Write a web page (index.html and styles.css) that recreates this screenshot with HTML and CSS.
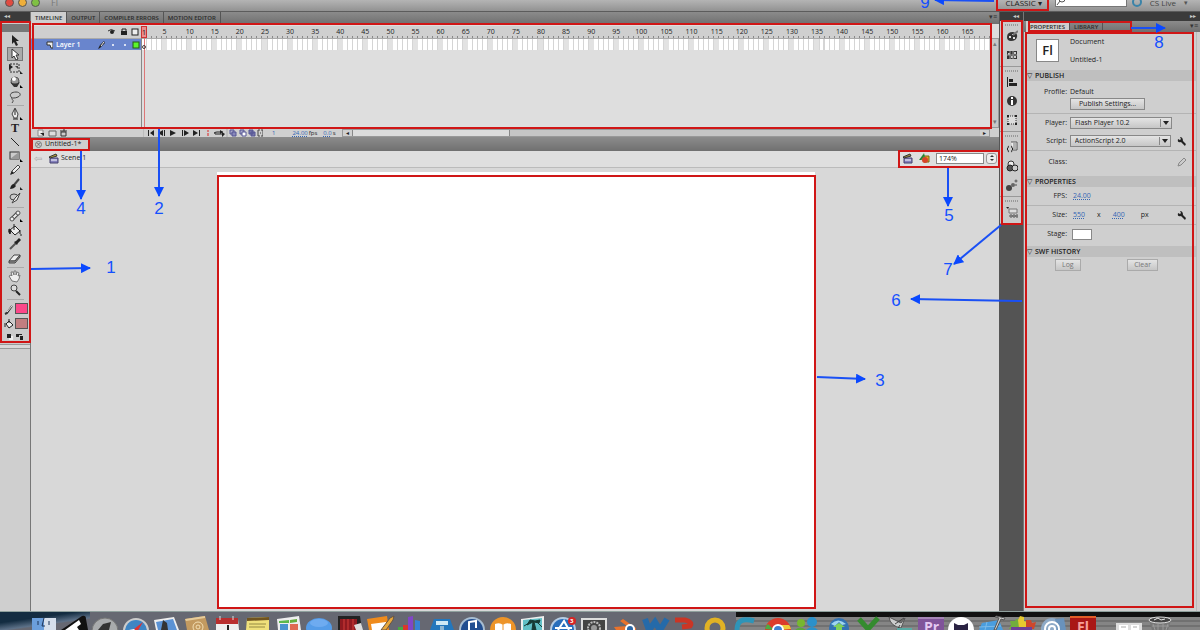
FILE: index.html
```
<!DOCTYPE html>
<html lang="en">
    <head>
        <meta charset="utf-8">
        <title>Untitled-1</title>
        <link rel="stylesheet" href="styles.css">
    </head>
    <body>
        <header class="titlebar">
            <span class="light red"></span>
            <span class="light yellow"></span>
            <span class="light green"></span>
            <span class="app-name">Fl</span>
            <button class="workspace-button">CLASSIC ▾</button>
            <label class="search">
                <svg width="12" height="9" viewBox="0 0 12 9"><circle cx="6" cy="2" r="3" fill="none" stroke="#555"/><path d="M4 4 1 8" stroke="#555"/></svg>
                <input type="text" aria-label="Search">
            </label>
            <svg class="live-ring" width="12" height="8" viewBox="0 0 12 8"><circle cx="6" cy="3" r="4" fill="none" stroke="#3b83a8" stroke-width="2"/></svg>
            <button class="live-button">CS Live</button>
            <span class="live-caret">▾</span>
        </header>

        <div class="app">
            <nav class="tools">
                <div class="dark-head">◂◂</div>
                <div class="tools-grip"></div>
                <button aria-label="Selection"><svg viewBox="0 0 16 14"><path d="M5 2v9l2-2 2 4 2-1-2-4h3z" fill="#222"/></svg></button>
                <button class="active" aria-label="Subselection"><svg viewBox="0 0 16 14"><path d="M5 2v9l2-2 2 4 2-1-2-4h3z" fill="#fff" stroke="#333"/></svg></button>
                <button aria-label="Free transform"><svg viewBox="0 0 16 14"><rect x="3" y="3" width="9" height="8" fill="none" stroke="#333" stroke-dasharray="2 1"/><path d="M2 3v6l4-3zM13 10v3h3z" fill="#222"/><path d="M8 5h3v3z" fill="#444"/></svg></button>
                <button aria-label="3D rotation"><svg viewBox="0 0 16 14"><circle cx="8" cy="6" r="4" fill="#999" stroke="#555"/><path d="M3 7q5 3 10 0l-3 5H7z" fill="#333"/><circle cx="7" cy="4" r="2" fill="#fff"/><path d="M13 10v3h3z"/></svg></button>
                <button aria-label="Lasso"><svg viewBox="0 0 16 14"><path d="M5 9C1 5 5 3 9 3s6 3 2 5-7 0-6 2 2 1 0 4" fill="none" stroke="#444"/></svg></button>
                <hr>
                <button aria-label="Pen"><svg viewBox="0 0 16 14"><path d="M8 1 5 7l2 4h3l1-4z" fill="#eee" stroke="#444"/><path d="M8 2v6M6 12h5" stroke="#222"/><path d="M13 10v3h3z"/></svg></button>
                <button class="text-tool" aria-label="Text">T</button>
                <button aria-label="Line"><svg viewBox="0 0 16 14"><path d="m4 3 8 8" stroke="#222"/></svg></button>
                <button aria-label="Rectangle"><svg viewBox="0 0 16 14"><rect x="3" y="3" width="9" height="7" fill="#ccc" stroke="#333"/><path d="M3 10 12 3v7z" fill="#999"/><path d="M13 10v3h3z"/></svg></button>
                <button aria-label="Pencil"><svg viewBox="0 0 16 14"><path d="m4 11 1-3 6-6 2 2-6 6z" fill="#eee" stroke="#444"/><path d="m3 12 2-4 2 2z" fill="#222"/></svg></button>
                <button aria-label="Brush"><svg viewBox="0 0 16 14"><path d="m12 2-5 6" stroke="#444" stroke-width="2"/><path d="M3 12q1-5 4-5l2 2q-2 3-6 3zM13 10v3h3z" fill="#222"/></svg></button>
                <button aria-label="Deco"><svg viewBox="0 0 16 14"><ellipse cx="7" cy="6" rx="4" ry="3" fill="none" stroke="#444"/><path d="m13 2-5 5-3 5 5-3z" fill="#eee" stroke="#444"/></svg></button>
                <hr>
                <button aria-label="Bone"><svg viewBox="0 0 16 14"><path d="m5 10 6-6" stroke="#444" stroke-width="4"/><path d="m5 10 6-6" stroke="#eee" stroke-width="2"/><circle cx="5" cy="10" r="2" fill="#eee" stroke="#555"/><circle cx="11" cy="4" r="2" fill="#eee" stroke="#555"/><path d="M13 10v3h3z"/></svg></button>
                <button aria-label="Paint bucket"><svg viewBox="0 0 16 14"><path d="m3 7 5-4 5 5-5 4z" fill="#eee" stroke="#222"/><path d="M2 6q-1 3 1 5l1-4z" fill="#222" stroke="#222"/><path d="M7 1v6M13 7v4M13 12h2" stroke="#222"/></svg></button>
                <button aria-label="Eyedropper"><svg viewBox="0 0 16 14"><path d="m3 12 6-6" stroke="#555" stroke-width="2"/><path d="m7 5 2-1 3-3 2 2-3 3-1 2z" fill="#222"/></svg></button>
                <button aria-label="Eraser"><svg viewBox="0 0 16 14"><path d="m2 10 5-6h6l-5 6z" fill="#eee" stroke="#444"/><path d="m2 10 6 0 5-6v2l-5 6H2z" fill="#999" stroke="#444"/></svg></button>
                <hr>
                <button aria-label="Hand"><svg viewBox="0 0 16 14"><path d="M5 12 2 7l2-1 1 1-1-4h2l1 3V2h2v4l1-3 2 1-1 3 2-1-1 4-2 3z" fill="#eee" stroke="#777"/></svg></button>
                <button aria-label="Zoom"><svg viewBox="0 0 16 14"><circle cx="7" cy="5" r="3" fill="#ddd" stroke="#444"/><path d="m9 8 4 4" stroke="#222" stroke-width="2"/></svg></button>
                <hr>
                <div class="color-row">
                    <svg viewBox="0 0 10 12"><path d="m1 11 2-1 5-7" fill="none" stroke="#333" stroke-width="2"/><path d="m3 9 5-6" stroke="#eee"/></svg>
                    <button class="swatch pink" aria-label="Stroke colour"></button>
                </div>
                <div class="color-row">
                    <svg viewBox="0 0 10 12"><path d="m2 6 3-3 4 4-4 3z" fill="#eee" stroke="#222"/><path d="M1 5v4M5 1v4" stroke="#222"/></svg>
                    <button class="swatch brown" aria-label="Fill colour"></button>
                </div>
                <div class="color-swap">
                    <svg width="18" height="7" viewBox="0 0 18 7"><path d="M3 3h4v4H3z" fill="#eee"/><path d="M1 1h4v4H1zM10 1h3v3h-3zM14 3h3v4h-3zM13 1h3v1h-3z" fill="#222"/></svg>
                </div>
                <div class="tools-end"></div>
            </nav>

            <main class="document">
                <div class="tabs">
                    <button class="tab active">TIMELINE</button>
                    <button class="tab">OUTPUT</button>
                    <button class="tab">COMPILER ERRORS</button>
                    <button class="tab">MOTION EDITOR</button>
                    <span class="panel-menu">▾≡</span>
                </div>

                <section class="timeline">
                    <div class="layers">
                        <div class="layers-head">
                            <svg width="32" height="10" viewBox="0 0 32 10"><path d="M1 4q3-3 7 0" fill="none" stroke="#333"/><circle cx="5" cy="5" r="2" fill="#222"/><path d="M14 4h6v4h-6z" fill="#222"/><path d="M15 4V2h4v2" fill="none" stroke="#222"/><rect x="25" y="2" width="6" height="6" fill="#eee" stroke="#222"/></svg>
                        </div>
                        <div class="layer">
                            <svg width="7" height="8" viewBox="0 0 7 8"><path d="M1 1h6v6H5L4 4H1z" fill="#eee" stroke="#333"/></svg>
                            <span class="layer-name">Layer 1</span>
                            <svg width="44" height="10" viewBox="0 0 44 10"><path d="m1 9 2-4 4-4 1 2-5 5z" fill="#222"/><path d="m4 6 3-4" stroke="#eee"/><circle cx="16" cy="5" r="1" fill="#fff"/><circle cx="28" cy="5" r="1" fill="#fff"/><rect x="36" y="2" width="6" height="6" fill="#5bf52c" stroke="#235c12"/></svg>
                        </div>
                    </div>
                    <div class="frames">
                        <ol class="ruler">
                            <li class="edge"></li>
                            <li>5</li><li>10</li><li>15</li><li>20</li><li>25</li><li>30</li><li>35</li><li>40</li><li>45</li><li>50</li><li>55</li>
                            <li>60</li><li>65</li><li>70</li><li>75</li><li>80</li><li>85</li><li>90</li><li>95</li><li>100</li><li>105</li><li>110</li>
                            <li>115</li><li>120</li><li>125</li><li>130</li><li>135</li><li>140</li><li>145</li><li>150</li><li>155</li><li>160</li><li>165</li>
                            <li class="edge"></li>
                        </ol>
                        <span class="playhead">1</span>
                        <span class="keyframe"></span>
                    </div>
                    <div class="vscroll"><span>▴</span><span>▾</span></div>
                </section>

                <div class="controls">
                    <div class="layer-actions">
                        <svg width="30" height="8" viewBox="0 0 30 8"><path d="M1 1h5v6H1z" fill="#eee" stroke="#888"/><path d="M3 4h4v3z" fill="#222"/><path d="M12 2h7v5h-7z" fill="#ddd" stroke="#666"/><path d="M24 3h5v4h-5zM23 2h7M26 1h2" fill="#ccc" stroke="#333"/></svg>
                    </div>
                    <svg class="transport" width="120" height="8" viewBox="0 0 120 8"><path d="M0 0v8M84 0v8" stroke="#aaa"/><path d="M5 1h1v6H5zM11 1v6L7 4zM20 1v6l-5-3zM21 1h1v6h-1zM27 1v6l6-3zM39 1h1v6h-1zM41 1v6l5-3zM50 1v6l5-3zM56 1h1v6h-1z" fill="#222"/><path d="M65 1v2M65 4v3" stroke="#d22"/><path d="M80 3h-6q-4 0-2 2h7" fill="none" stroke="#222"/><path d="M77 1v4l3-2zM79 3v5l3-3z" fill="#222"/><g stroke="#545494"><path d="M87 1h4v4h-4z" fill="#aac"/><path d="M89 3h4v4h-4z" fill="#88b"/><path d="M97 1h4v4h-4z" fill="#aac"/><path d="M99 3h4v4h-4z" fill="#fff"/><path d="M106 1h4v4h-4zM108 3h4v4h-4z" fill="#77a"/></g><path d="M117 1h-2v6h2M118 1h2v6h-2M117 4h1" fill="none" stroke="#444"/></svg>
                    <span class="frame-no">1</span>
                    <a href="#fps">24.00</a><span class="unit">fps</span>
                    <a href="#time">0.0</a><span class="unit">s</span>
                    <div class="hscroll">
                        <span class="scroll-arrow">◂</span>
                        <span class="thumb"></span>
                        <span class="track"></span>
                        <span class="scroll-arrow">▸</span>
                    </div>
                </div>

                <div class="doc-tabs">
                    <button class="doc-tab"><span class="close">×</span>Untitled-1*</button>
                </div>

                <div class="edit-bar">
                    <span class="back">⇦</span>
                    <svg width="10" height="11" viewBox="0 0 10 11"><path d="M1 5h8v5H1z" fill="#8581bd" stroke="#45406f"/><path d="m0 4 7-3 1 2-7 2z" fill="#bba63a" stroke="#333"/><path d="M2 7h6" stroke="#fff"/></svg>
                    <span class="scene">Scene 1</span>
                    <svg width="10" height="11" viewBox="0 0 10 11"><path d="M1 5h8v5H1z" fill="#8581bd" stroke="#45406f"/><path d="m0 4 7-3 1 2-7 2z" fill="#a58f3f" stroke="#333"/><path d="M2 7h6" stroke="#fff"/></svg>
                    <svg width="11" height="11" viewBox="0 0 11 11"><path d="M5 3h5v6H5z" fill="#e8b023" stroke="#7b6114"/><path d="m5 0 2 7H0z" fill="#3a9b45"/><circle cx="6" cy="7" r="3" fill="#d7442a"/><path d="m1 7 4-5" stroke="#286a31"/></svg>
                    <input class="zoom" type="text" value="174%" aria-label="Zoom">
                    <button class="stepper" aria-label="Zoom levels"><svg width="4" height="6" viewBox="0 0 4 6"><path d="M2 0 4 2H0zM2 6 0 4h4z" fill="#333"/></svg></button>
                </div>

                <div class="pasteboard"><div class="stage"></div></div>
            </main>

            <aside class="icon-dock">
                <div class="dark-head">◂◂</div>
                <div class="icon-group">
                    <button aria-label="Color"><svg viewBox="0 0 12 12"><path d="M1 7q0-5 6-5 5 1 4 5-1 4-6 4-4 0-4-4z" fill="#333"/><path d="M3 6h2v2H3zM6 4h2v1H6zM7 7h2v2H7z" fill="#ddd"/><path d="m7 5 5-4" stroke="#777" stroke-width="2"/></svg></button>
                    <button aria-label="Swatches"><svg viewBox="0 0 12 12"><path d="M1 2h10v8H1z" fill="#333"/><path d="M2 4h2v2H2zM8 3h2v2H8zM5 7h2v2H5zM8 7h2v2H8z" fill="#ccc"/><path d="M1 6h10M4 2v8M7 2v8" stroke="#999"/></svg></button>
                </div>
                <div class="icon-group">
                    <button aria-label="Align"><svg viewBox="0 0 12 12"><path d="M1 1h1v10H1zM3 3h4v3H3zM3 7h8v3H3z" fill="#222"/></svg></button>
                    <button aria-label="Info"><svg viewBox="0 0 12 12"><circle cx="6" cy="6" r="5" fill="#333"/><path d="M5 2h2v2H5zM5 5h2v5H5z" fill="#fff"/></svg></button>
                    <button aria-label="Transform"><svg viewBox="0 0 12 12"><path d="M2 2h8v8H2z" fill="#ddd" stroke="#333" stroke-dasharray="1 1"/><path d="M1 1h2v2H1zM9 1h2v2H9zM1 9h2v2H1zM9 9h2v2H9z" fill="#222"/></svg></button>
                </div>
                <div class="icon-group">
                    <button aria-label="Code snippets"><svg viewBox="0 0 12 12"><path d="M5 1h6v8H7" fill="#eee" stroke="#555"/><path d="M7 3h3M7 5h3M7 7h3" stroke="#777"/><path d="M3 5q-1 0-1 2L1 8l1 1q0 2 1 2M5 5q1 0 1 2l1 1-1 1q0 2-1 2" fill="none" stroke="#222"/></svg></button>
                    <button aria-label="Components"><svg viewBox="0 0 12 12"><circle cx="5" cy="4" r="3" fill="#eee" stroke="#333"/><circle cx="4" cy="8" r="3" fill="#555" stroke="#222"/><circle cx="9" cy="8" r="3" fill="#ccc" stroke="#222"/></svg></button>
                    <button aria-label="Motion presets"><svg viewBox="0 0 12 12"><circle cx="3" cy="9" r="3" fill="#444"/><circle cx="7" cy="6" r="2" fill="#666"/><circle cx="10" cy="2" r="1" fill="#ccc" stroke="#555"/><circle cx="10" cy="6" r="1" fill="#777"/></svg></button>
                </div>
                <div class="icon-group">
                    <button aria-label="Project"><svg viewBox="0 0 12 12"><path d="M0 1h3L2 3z" fill="#222"/><path d="M3 3h8v4H3z" fill="#ddd" stroke="#777"/><path d="M4 9h2v2H4zM7 9h2v2H7zM10 9h2v2h-2z" fill="#eee" stroke="#555"/></svg></button>
                </div>
            </aside>

            <aside class="inspector">
                <div class="dark-head">▸▸</div>
                <div class="tabs">
                    <button class="tab active">PROPERTIES</button>
                    <button class="tab">LIBRARY</button>
                    <span class="panel-menu">▾≡</span>
                </div>
                <div class="inspector-body">
                    <div class="doc-info">
                        <span class="doc-icon">Fl</span>
                        <div class="doc-names"><span>Document</span><span>Untitled-1</span></div>
                    </div>

                    <h2>PUBLISH</h2>
                    <div class="block profile">
                        <div class="row"><span class="name">Profile:</span><span>Default</span></div>
                        <div class="row"><span class="name"></span><button class="push">Publish Settings...</button></div>
                    </div>
                    <div class="block publish">
                        <div class="row">
                            <label class="name" for="player">Player:</label>
                            <span class="select"><select id="player"><option>Flash Player 10.2</option></select><i></i></span>
                        </div>
                        <div class="row">
                            <label class="name" for="script">Script:</label>
                            <span class="select"><select id="script"><option>ActionScript 2.0</option></select><i></i></span>
                            <button class="tool-icon" aria-label="ActionScript settings"><svg viewBox="0 0 10 10"><path d="M3 1q3 0 3 4l3 3-1 2-4-4Q0 7 1 3l2 1 1-1z" fill="#222"/></svg></button>
                        </div>
                    </div>
                    <div class="block class-row">
                        <div class="row">
                            <span class="name">Class:</span>
                            <button class="tool-icon" aria-label="Edit class"><svg viewBox="0 0 10 10"><path d="m1 9 1-3 5-5 2 2-5 5z" fill="#ccc" stroke="#888"/></svg></button>
                        </div>
                    </div>

                    <h2>PROPERTIES</h2>
                    <div class="block">
                        <div class="row hot"><span class="name">FPS:</span><a href="#fps">24.00</a></div>
                    </div>
                    <div class="block">
                        <div class="row hot">
                            <span class="name">Size:</span><a href="#width">550</a><span class="times">x</span><a href="#height">400</a><span class="px">px</span>
                            <button class="tool-icon" aria-label="Document settings"><svg viewBox="0 0 10 10"><path d="M3 1q3 0 3 4l3 3-1 2-4-4Q0 7 1 3l2 1 1-1z" fill="#222"/></svg></button>
                        </div>
                    </div>
                    <div class="block last">
                        <div class="row"><span class="name">Stage:</span><button class="stage-color" aria-label="Stage colour"></button></div>
                    </div>

                    <h2>SWF HISTORY</h2>
                    <div class="history">
                        <button class="push" disabled>Log</button>
                        <button class="push" disabled>Clear</button>
                    </div>
                </div>
            </aside>
        </div>

        <ul class="dock">
            <li><svg viewBox="0 0 30 19"><path d="M3 7h12v12H3z" fill="#6b9fdc"/><path d="M15 7h12v12H15z" fill="#d5dfec"/><path d="M9 10v4M20 10v4M15 7l-2 8h3" stroke="#1d3458" fill="none"/></svg></li>
            <li><svg viewBox="0 0 30 19"><path d="M1 19 22 5q4-1 4 3l2 11z" fill="#111"/><path d="m5 19 14-10 2 4-4 3 2 3z" fill="#fff"/></svg></li>
            <li><svg viewBox="0 0 30 19"><circle cx="15" cy="20" r="13" fill="#a9abad" stroke="#777"/><path d="m8 19 5-6 8-2-2 8z" fill="#333"/></svg></li>
            <li><svg viewBox="0 0 30 19"><circle cx="15" cy="20" r="13" fill="#ccc"/><circle cx="15" cy="20" r="11" fill="#3f85c3"/><path d="m22 11-9 7 3 3z" fill="#d33"/><path d="m8 19 5-1 3 3z" fill="#fff"/></svg></li>
            <li><svg viewBox="0 0 30 19"><path d="m2 9 20-3 5 13H4z" fill="#eee"/><path d="m4 11 17-3 4 11H6z" fill="#5b92d4"/><path d="m11 9 4 3 1 7h-7z" fill="#333"/></svg></li>
            <li><svg viewBox="0 0 30 19"><path d="m3 8 20-3 4 14H5z" fill="#c39a60"/><path d="m3 8 20-3v2L4 10z" fill="#e6cc9b"/><circle cx="16" cy="16" r="5" fill="none" stroke="#f3dfb4"/><circle cx="16" cy="16" r="2" fill="none" stroke="#f3dfb4"/></svg></li>
            <li><svg viewBox="0 0 30 19"><path d="M3 8h22l1 11H3z" fill="#eee"/><path d="M3 7h22v6H3z" fill="#b92e2e"/><path d="M7 5v4M20 5v4" stroke="#ddd"/><path d="M15 14v5" stroke="#222" stroke-width="2"/></svg></li>
            <li><svg viewBox="0 0 30 19"><path d="m4 7 22-1v13H3z" fill="#efe07b"/><path d="m4 7 22-1v3L4 10z" fill="#705420"/><path d="M6 13h17M6 16h16" stroke="#958a45"/></svg></li>
            <li><svg viewBox="0 0 30 19"><path d="m3 8 22-3 2 14H4z" fill="#eee"/><path d="m5 10 10-1v3H5z" fill="#5cb84d"/><path d="m16 9 7-1v3l-7 1z" fill="#66ae3c"/><path d="M6 13h8v6H6z" fill="#4b93cf"/><path d="M16 13h8v6h-8z" fill="#e06a52"/></svg></li>
            <li><svg viewBox="0 0 30 19"><ellipse cx="15" cy="17" rx="13" ry="10" fill="#559ce8"/><ellipse cx="15" cy="12" rx="9" ry="4" fill="#6eabf0"/></svg></li>
            <li><svg viewBox="0 0 30 19"><path d="M3 5h22l2 14H3z" fill="#222"/><path d="M5 8h17v11H5z" fill="#8f1a20"/><path d="M9 8v11M13 8v11M18 8v11" stroke="#d23c39"/><path d="m19 14 7-2 2 7h-7z" fill="#ddd"/></svg></li>
            <li><svg viewBox="0 0 30 19"><path d="m2 8 20-3 2 14H4z" fill="#ef8b1c"/><path d="m6 13 15-2v8H7z" fill="#fff"/><path d="m16 19 9-12 4-2-1 4-7 10z" fill="#e9a83c" stroke="#654"/></svg></li>
            <li><svg viewBox="0 0 30 19"><path d="M2 16h6v3H2z" fill="#48a943"/><path d="M7 14h5v5H7z" fill="#d9362c"/><path d="m12 6 5-1v14h-5z" fill="#8146c8"/><path d="m19 9 5 1v9h-5z" fill="#3784d6"/></svg></li>
            <li><svg viewBox="0 0 30 19"><path d="m7 8 16 0 4 11H3z" fill="#2377bd"/><path d="M9 10h12v4H9z" fill="#cfe9f5"/><path d="M13 15h4v4h-4z" fill="#8fb6d2"/></svg></li>
            <li><svg viewBox="0 0 30 19"><circle cx="15" cy="19" r="13" fill="#a7bdd2"/><circle cx="15" cy="19" r="11" fill="#214e91"/><path d="M12 19v-8l7-1v7" fill="none" stroke="#fff" stroke-width="2"/></svg></li>
            <li><svg viewBox="0 0 30 19"><circle cx="15" cy="19" r="13" fill="#ed9428"/><path d="M7 13q5-2 8 1 3-3 8-1v6H7z" fill="#fff"/><path d="M15 14v5" stroke="#ed9428"/></svg></li>
            <li><svg viewBox="0 0 30 19"><path d="m3 8 23-3v14H3z" fill="#eee"/><path d="m5 9 19-2v12H5z" fill="#61bfc6"/><path d="m14 19 1-8-6 3 3-5 5 1 5-1-1 3-5-1 2 8zM6 15l5-3M19 11l5 5" fill="#173b36" stroke="#173b36"/></svg></li>
            <li><svg viewBox="0 0 30 19"><circle cx="14" cy="19" r="13" fill="#b5cce3"/><circle cx="14" cy="19" r="11" fill="#286ebc"/><path d="m9 19 6-9 5 9M6 17h17" fill="none" stroke="#fff" stroke-width="2"/><circle cx="23" cy="10" r="4" fill="#d62626"/><text x="21" y="12" class="badge">3</text></svg></li>
            <li><svg viewBox="0 0 30 19"><path d="M2 7h26v12H2z" fill="#ddd"/><path d="M4 9h22v10H4z" fill="#444"/><circle cx="15" cy="17" r="6" fill="none" stroke="#bbb" stroke-width="2" stroke-dasharray="2 1"/><circle cx="15" cy="17" r="3" fill="#999"/></svg></li>
            <li><svg viewBox="0 0 30 19"><path d="m4 16 13-1-7-5 3-2 13 9v2H6z" fill="#e9722b"/><circle cx="20" cy="18" r="5" fill="#fff"/><circle cx="20" cy="18" r="3" fill="#2c67a7"/></svg></li>
            <li><svg viewBox="0 0 30 19"><path d="m4 8 4 11 6-8 5 8 7-11" fill="none" stroke="#256aa9" stroke-width="6"/></svg></li>
            <li><svg viewBox="0 0 30 19"><path d="M4 9h10q8 2 5 6l-8 1" fill="none" stroke="#ca3525" stroke-width="5"/></svg></li>
            <li><svg viewBox="0 0 30 19"><circle cx="13" cy="17" r="8" fill="none" stroke="#e2b224" stroke-width="5"/></svg></li>
            <li><svg viewBox="0 0 30 19"><path d="M22 10q-17-5-17 9" fill="none" stroke="#2e94b8" stroke-width="5"/></svg></li>
            <li><svg viewBox="0 0 30 19"><circle cx="15" cy="20" r="13" fill="#dc3c2c"/><path d="M2 18q1-4 3-5l6 6z" fill="#4caa45"/><path d="M28 18q-1-3-2-4H15v5z" fill="#efcb38"/><circle cx="15" cy="19" r="6" fill="#fff"/><circle cx="15" cy="19" r="4" fill="#3f80d3"/></svg></li>
            <li><svg viewBox="0 0 30 19"><circle cx="8" cy="12" r="4" fill="#77b82f"/><circle cx="19" cy="11" r="5" fill="#2c91cb"/><path d="M2 19q5-5 11 0z" fill="#5aa93c"/><path d="M13 19q6-6 12 0z" fill="#2c91cb"/></svg></li>
            <li><svg viewBox="0 0 30 19"><circle cx="15" cy="17" r="10" fill="#3272b3"/><path d="M7 13q7-7 15 0l-4 1-3-3-4 4z" fill="#9fd5ee"/><path d="m9 16 6-4 6 4h-3v3h-6v-3z" fill="#7ed05a"/></svg></li>
            <li><svg viewBox="0 0 30 19"><path d="m5 8 9 10L24 7" fill="none" stroke="#348b2f" stroke-width="5"/></svg></li>
            <li><svg viewBox="0 0 30 19"><path d="M4 6q1 9 12 11l4-10-4 5z" fill="#ccc" stroke="#555"/><path d="m10 13 9-6M12 19l3-5" stroke="#444"/><path d="M12 17h15v2H12z" fill="#58aaa4"/></svg></li>
            <li><svg viewBox="0 0 30 19"><path d="M2 6h26v13H2z" fill="#80549a"/><path d="M2 6h26v2H2z" fill="#a585b6"/><text x="8" y="21" class="adobe pr">Pr</text></svg></li>
            <li><svg viewBox="0 0 30 19"><circle cx="15" cy="19" r="13" fill="#fff"/><path d="M8 19v-7l4 2h6l4-2v7z" fill="#2b2343"/></svg></li>
            <li><svg viewBox="0 0 30 19"><path d="m5 12 17-3 4 10H2z" fill="#4a9ddf"/><path d="m10 11-2 8M2 16l22-1" stroke="#7cbbea"/><path d="m17 19 5-12-4-1 1-1 9 2-1 2-3-1-5 11z" fill="#ccc" stroke="#555"/></svg></li>
            <li><svg viewBox="0 0 30 19"><path d="M3 10h5l1-2 4 1v9H2l2-4z" fill="#72ad3d"/><path d="m11 9 2-4 4 1v4l4 1-1 6h-8z" fill="#e7ca31"/><path d="M19 9h5l1 3 4-1-2 7h-8z" fill="#ce472c"/><path d="M4 16h21v3H4z" fill="#6e4099"/></svg></li>
            <li><svg viewBox="0 0 30 19"><circle cx="14" cy="18" r="11" fill="#8eaac7"/><path d="m17 8 9-1 2 12h-9z" fill="#6992bb"/><circle cx="14" cy="18" r="7" fill="none" stroke="#fff" stroke-width="2"/><circle cx="14" cy="18" r="3" fill="none" stroke="#fff" stroke-width="2"/></svg></li>
            <li><svg viewBox="0 0 30 19"><path d="M2 5h26v14H2z" fill="#a91716"/><path d="M2 5h26v2H2z" fill="#e25d28"/><text x="9" y="21" class="adobe fl">Fl</text></svg></li>
            <li class="gap"></li>
            <li><svg viewBox="0 0 30 19"><path d="M2 12h26v7H2z" fill="#ddd"/><path d="M5 14h9v5H5zM17 14h8v5h-8z" fill="#fff"/><path d="M7 16h5M19 16h4" stroke="#aaa"/></svg></li>
            <li><svg viewBox="0 0 30 19"><path d="m4 9 3 10h16l3-10z" fill="#777"/><ellipse cx="15" cy="9" rx="11" ry="3" fill="#444" stroke="#ddd"/><path d="m9 9 4-2 3 2 4-1" stroke="#eee" fill="none"/><path d="m8 13 2 6M13 13v6M18 13v6M23 13l-2 6M7 15h17" stroke="#999"/></svg></li>
        </ul>

        <svg class="notes" width="1200" height="630" viewBox="0 0 1200 630">
            <defs>
                <marker id="head" viewBox="0 0 10 10" refX="9" refY="5" markerWidth="10" markerHeight="10" markerUnits="userSpaceOnUse" orient="auto"><path d="m0 0 10 5-10 5z"/></marker>
            </defs>
            <g class="boxes">
                <rect x="1" y="22" width="29" height="320"/>
                <rect x="33" y="24" width="958" height="104"/>
                <rect x="32" y="139" width="57" height="11"/>
                <rect x="218" y="176" width="597" height="432"/>
                <rect x="899" y="151" width="100" height="16"/>
                <rect x="1002" y="21" width="20" height="203"/>
                <rect x="1029" y="22" width="102" height="9"/>
                <rect x="1026" y="33" width="167" height="574"/>
                <rect x="997" y="-4" width="51" height="14"/>
            </g>
            <g class="arrows">
                <path d="M31 269 90 268"/>
                <path d="M159 129v67"/>
                <path d="m817 377 48 2"/>
                <path d="M81 151v48"/>
                <path d="M948 168v38"/>
                <path d="m1022 301-111-2"/>
                <path d="m1001 225-47 39"/>
                <path d="M1131 28h34"/>
                <path d="m994 1-59-1"/>
            </g>
            <g class="numbers">
                <text x="111" y="273">1</text>
                <text x="159" y="214">2</text>
                <text x="880" y="386">3</text>
                <text x="81" y="214">4</text>
                <text x="949" y="221">5</text>
                <text x="896" y="306">6</text>
                <text x="948" y="275">7</text>
                <text x="1159" y="48">8</text>
                <text x="925" y="8">9</text>
            </g>
        </svg>
    </body>
</html>
```
FILE: styles.css
```
* {
    box-sizing: border-box;
}
body {
    margin: 0;
    height: 100vh;
    display: flex;
    flex-direction: column;
    overflow: hidden;
    background: #d8d8d8;
    color: #222;
    font: 7px/10px "Open Sans", "Noto Sans", sans-serif;
}
button, input, select {
    margin: 0;
    padding: 0;
    border: 0;
    background: none;
    color: inherit;
    font: inherit;
}
svg {
    display: block;
    flex: none;
}
a {
    color: #3667b5;
    text-decoration: underline dotted;
}

/* title bar */
.titlebar {
    height: 12px;
    flex: none;
    display: flex;
    align-items: flex-end;
    padding: 0 12px 4px 5px;
    background: linear-gradient(#b4b4b4, #929292);
    border-bottom: 1px solid #5c5c5c;
    line-height: 8px;
}
.light {
    width: 9px;
    height: 9px;
    margin-right: 4px;
    border: 1px solid #555;
    border-radius: 50%;
}
.red { background: #e04b41; }
.yellow { background: #efaf3a; }
.green { background: #7fc043; }
.app-name {
    margin-left: 7px;
    color: #777;
    font-size: 9px;
}
.workspace-button {
    margin-left: auto;
    margin-right: 13px;
    font-size: 8px;
}
.search {
    width: 72px;
    display: flex;
    background: #fff;
    border: 1px solid #777;
}
.search input {
    width: 100%;
    min-width: 0;
}
.live-ring { margin: 0 7px 0 4px; }
.live-button { color: #444; font-size: 8px; }
.live-caret { margin-left: 8px; color: #555; }

/* layout */
.app {
    flex: 1;
    min-height: 0;
    display: flex;
}
.dark-head {
    height: 9px;
    flex: none;
    background: #3b3b3b;
    color: #ccc;
    font-size: 6px;
    line-height: 8px;
    padding: 0 4px;
}

/* tools */
.tools {
    width: 31px;
    flex: none;
    display: flex;
    flex-direction: column;
    align-items: center;
    background: #cbcbcb;
    border-right: 1px solid #777;
}
.tools .dark-head {
    width: 100%;
}
.tools-grip {
    width: 100%;
    height: 8px;
    margin: 3px 0 1px;
    background: #777;
}
.tools button {
    width: 16px;
    height: 14px;
}
.tools .active {
    background: #aaa;
    outline: 1px solid #777;
    outline-offset: -1px;
}
.tools hr {
    width: 17px;
    margin: 2px 0 1px;
    border: 0;
    border-top: 1px solid #aaa;
}
.tools .text-tool {
    font: bold 12px/14px "Liberation Serif", serif;
}
.color-row {
    width: 100%;
    height: 15px;
    display: flex;
    align-items: center;
    gap: 1px;
    padding-left: 4px;
}
.color-row svg {
    width: 10px;
    height: 12px;
}
.tools .swatch {
    width: 13px;
    height: 11px;
    border: 1px solid #555;
}
.tools .pink { background: #fb4889; }
.tools .brown { background: #c17e80; }
.color-swap { padding: 2px 0 4px; }
.tools-end {
    width: 100%;
    flex: 1;
    border-top: 1px solid #999;
    background: linear-gradient(#d8d8d8 3px, #999 3px, #999 4px, #cfcfcf 4px);
}

/* panel tabs */
.document {
    flex: 1;
    min-width: 0;
    display: flex;
    flex-direction: column;
    border-right: 1px solid #555;
}
.tabs {
    height: 12px;
    flex: none;
    display: flex;
    background: linear-gradient(#8b8b8b, #707070);
}
.tab {
    padding: 0 4px;
    border-right: 1px solid #555;
    color: #2c2c2c;
    font-size: 6px;
    font-weight: 600;
}
.tab.active {
    background: #cfcfcf;
}
.panel-menu {
    margin-left: auto;
    padding-right: 2px;
    color: #333;
}

/* timeline */
.timeline {
    height: 104px;
    flex: none;
    display: flex;
    padding-top: 2px;
    background: #dedede;
}
.layers {
    width: 111px;
    flex: none;
    border-right: 1px solid #888;
}
.layers-head {
    height: 13px;
    display: flex;
    justify-content: flex-end;
    align-items: center;
    padding-right: 2px;
    background: #cfcfcf;
    border-bottom: 1px solid #aaa;
}
.layer {
    height: 11px;
    display: flex;
    align-items: center;
    padding-left: 15px;
    background: #6985cd;
    color: #fff;
}
.layer-name {
    flex: 1;
    padding-left: 3px;
    font-weight: 600;
}
.frames {
    position: relative;
    flex: 1;
}
.ruler {
    display: flex;
    margin: 0;
    padding: 0;
    list-style: none;
    background: #cfcfcf;
}
.ruler li {
    --frame: 20%;
    flex: 5 0 0;
    height: 24px;
    line-height: 12px;
    text-align: center;
    white-space: nowrap;
    background:
        linear-gradient(#e2e2e2, #e2e2e2) 50% 100% / 20% 11px no-repeat,
        repeating-linear-gradient(to right, #fff 0 calc(var(--frame) * 0.75), #d5d5d5 0 var(--frame)) 0 100% / 100% 11px no-repeat,
        linear-gradient(#aaa, #aaa) 0 12px / 100% 1px no-repeat,
        repeating-linear-gradient(to right, transparent 0 calc(var(--frame) * 0.8), #888 0 var(--frame)) 0 10px / 100% 2px no-repeat;
}
.ruler .edge {
    --frame: 50%;
    flex-grow: 2;
    background-size: 0 0, 100% 11px, 100% 1px, 100% 2px;
}
.playhead {
    position: absolute;
    left: -1px;
    top: 0;
    width: 6px;
    height: 12px;
    line-height: 11px;
    text-align: center;
    background: #e98d8d;
    border: 1px solid #c33;
}
.playhead::after {
    content: "";
    position: absolute;
    left: 2px;
    top: 11px;
    height: 90px;
    border-left: 1px solid #d77;
}
.keyframe {
    position: absolute;
    left: 0;
    top: 19px;
    width: 4px;
    height: 4px;
    border: 1px solid #444;
    border-radius: 50%;
}
.vscroll {
    width: 8px;
    display: flex;
    flex-direction: column;
    justify-content: space-between;
    align-items: center;
    margin: 12px 0 0 1px;
    background: #c8c8c8;
    border: 1px solid #999;
    color: #777;
}

/* frame controls */
.controls {
    height: 9px;
    flex: none;
    display: flex;
    align-items: center;
    background: #d0d0d0;
    font-size: 6px;
    line-height: 8px;
}
.layer-actions {
    width: 104px;
    padding-left: 6px;
}
.transport {
    width: 120px;
    margin-left: 8px;
}
.frame-no {
    margin: 0 17px 0 9px;
    color: #3667b5;
}
.unit { margin: 0 6px 0 1px; }
.hscroll {
    flex: 1;
    height: 8px;
    display: flex;
    margin-right: 9px;
    border: 1px solid #999;
    line-height: 6px;
}
.scroll-arrow {
    width: 9px;
    text-align: center;
}
.thumb {
    flex: 1;
    background: #dcdcdc;
    border: solid #888;
    border-width: 0 1px;
}
.track {
    flex: 3;
    background: #c6c6c6;
}

/* document tab, edit bar */
.doc-tabs {
    height: 14px;
    flex: none;
    display: flex;
    padding: 1px 0 1px 1px;
    background: linear-gradient(#8c8c8c, #707070);
}
.doc-tab {
    width: 57px;
    display: flex;
    align-items: center;
    gap: 3px;
    padding-left: 3px;
    background: #cfcfcf;
    white-space: nowrap;
}
.close {
    width: 7px;
    height: 7px;
    border: 1px solid #777;
    border-radius: 50%;
    color: #555;
    line-height: 5px;
}
.edit-bar {
    height: 17px;
    flex: none;
    display: flex;
    align-items: center;
    gap: 6px;
    padding: 0 2px 2px 3px;
    background: #dfdfdf;
    border-bottom: 1px solid #bbb;
}
.back {
    width: 9px;
    color: #aaa;
    font-size: 10px;
}
.scene {
    flex: 1;
    margin-left: -4px;
}
.zoom {
    width: 48px;
    height: 11px;
    padding-left: 2px;
    background: #fff;
    border: 1px solid #888;
}
.stepper {
    width: 11px;
    height: 11px;
    display: flex;
    align-items: center;
    justify-content: center;
    margin-left: -4px;
    background: #eee;
    border: 1px solid #999;
    border-radius: 3px;
}
.pasteboard {
    flex: 1;
    padding: 4px 0 3px 2px;
    background: #d8d8d8;
}
.stage {
    width: 62%;
    height: 100%;
    margin: 0 auto;
    background: #fff;
}

/* collapsed panels */
.icon-dock {
    width: 23px;
    flex: none;
    background: #545454;
}
.icon-dock .dark-head {
    text-align: right;
}
.icon-group {
    display: grid;
    justify-content: center;
    gap: 7px;
    padding: 9px 0 5px;
    background:
        repeating-linear-gradient(to right, #999 0 1px, transparent 0 2px) 50% 3px / 14px 2px no-repeat,
        #cbcbcb;
    border-bottom: 1px solid #999;
}
.icon-group button, .icon-group svg {
    width: 12px;
    height: 12px;
}

/* inspector */
.inspector {
    width: 177px;
    flex: none;
    display: flex;
    flex-direction: column;
    background: #cfcfcf;
    border-left: 1px solid #777;
}
.inspector .dark-head {
    text-align: right;
}
.inspector .tabs {
    height: 11px;
    padding-left: 2px;
}
.inspector-body {
    flex: 1;
    margin: 0 3px;
    border-right: 1px solid #bbb;
}
.doc-info {
    height: 38px;
    display: flex;
    gap: 11px;
    padding: 7px 0 0 9px;
}
.doc-icon {
    width: 23px;
    height: 23px;
    background: #fff;
    border: 1px solid #888;
    font-size: 13px;
    font-weight: 600;
    line-height: 21px;
    text-align: center;
}
.doc-names {
    display: grid;
    gap: 8px;
    align-content: start;
    margin-top: -2px;
}
.inspector h2 {
    height: 11px;
    display: flex;
    align-items: center;
    gap: 3px;
    margin: 0;
    background: #bfbfbf;
    font-size: 7px;
    font-weight: 600;
    line-height: 11px;
}
.inspector h2::before {
    content: "▽";
    font-weight: 400;
}
.block {
    display: flex;
    flex-direction: column;
    padding: 3px 0;
    border-bottom: 1px solid #b4b4b4;
}
.profile { padding-top: 5px; }
.publish { gap: 6px; }
.class-row {
    padding: 5px 0 8px;
    border-bottom: 0;
}
.last {
    padding-bottom: 6px;
    border-bottom: 0;
}
.row {
    height: 12px;
    display: flex;
    align-items: center;
}
.hot { gap: 3px; }
.name {
    width: 40px;
    margin-right: 3px;
    text-align: right;
}
.push {
    height: 12px;
    padding: 0 4px;
    background: linear-gradient(#e4e4e4, #c6c6c6);
    border: 1px solid #888;
    line-height: 10px;
}
.push:disabled {
    padding: 0 6px;
    color: #777;
    border-color: #aaa;
}
.profile .push { width: 75px; }
.select {
    position: relative;
    width: 102px;
}
.select select {
    width: 100%;
    height: 12px;
    display: block;
    padding: 0 4px;
    appearance: none;
    background: linear-gradient(#e4e4e4, #c6c6c6);
    border: 1px solid #888;
}
.select i {
    position: absolute;
    top: 2px;
    right: 2px;
    width: 10px;
    height: 8px;
    border-left: 1px solid #888;
    pointer-events: none;
}
.select i::after {
    content: "";
    position: absolute;
    left: 2px;
    top: 2px;
    border: 3px solid transparent;
    border-top: 4px solid #222;
    border-bottom: 0;
}
.tool-icon {
    width: 10px;
    height: 10px;
    margin-left: auto;
    margin-right: 9px;
}
.select + .tool-icon {
    margin-left: 6px;
}
.times { margin: 0 9px; }
.px { margin-left: 13px; }
.stage-color {
    width: 20px;
    height: 11px;
    margin-left: 2px;
    background: #fff;
    border: 1px solid #888;
}
.history {
    display: flex;
    justify-content: space-between;
    padding: 2px 38px 0 28px;
}

/* dock */
.dock {
    height: 19px;
    flex: none;
    display: flex;
    margin: 0;
    padding: 0 25px 0 29px;
    overflow: hidden;
    list-style: none;
    border-top: 1px solid #8fa09d;
    background:
        linear-gradient(#111 5px, transparent 5px) 100% 0 / 464px 100% no-repeat,
        repeating-linear-gradient(#858585 0 3px, #717171 3px 5px) 100% 0 / 464px 100% no-repeat,
        linear-gradient(172deg, #132c41 0 35%, #5d7188 60%, transparent 65%) 0 0 / 90px 100% no-repeat,
        #666872;
}
.dock li {
    flex: 1;
}
.dock .gap {
    flex: 0 0 15px;
}
.dock svg {
    width: 30px;
    height: 19px;
    margin: -1px auto 0;
}
.adobe {
    font: bold 14px "Open Sans", sans-serif;
}
.pr { fill: #e4c8f2; }
.fl { fill: #f7a09b; }
.badge {
    fill: #fff;
    font: bold 6px "Open Sans", sans-serif;
}

/* numbered callouts drawn over the window */
.notes {
    position: absolute;
    left: 0;
    top: 0;
    pointer-events: none;
}
.boxes {
    fill: none;
    stroke: #d01616;
    stroke-width: 2;
}
.arrows {
    fill: none;
    stroke: #1a50f5;
    stroke-width: 2;
}
.arrows path {
    marker-end: url(#head);
}
#head path {
    fill: #0a48ff;
    stroke: none;
    marker-end: none;
}
.numbers {
    fill: #1450ff;
    font: 17px "Liberation Sans", Arial, sans-serif;
    text-anchor: middle;
}
```
